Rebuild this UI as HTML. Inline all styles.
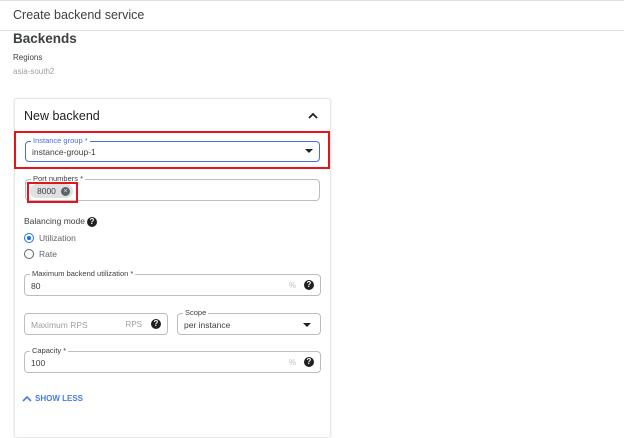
<!DOCTYPE html>
<html><head><style>
*{box-sizing:border-box;margin:0;padding:0}
body{width:624px;height:413px;background:#fff;font-family:"Liberation Sans",sans-serif;position:relative;overflow:hidden;color:#202124}
.a{position:absolute}
.f{position:absolute;border:1px solid #bdbdbd;border-radius:4px;height:22px}
.lbl{position:absolute;top:-6px;left:5px;background:#fff;padding:0 2px;font-size:7.5px;color:#3c4043;line-height:9px}
.val{position:absolute;left:6px;top:6px;font-size:8.5px;color:#3c4043}
.q{position:absolute;width:10px;height:10px;border-radius:50%;background:#202124;color:#fff;font-size:8px;font-weight:bold;text-align:center;line-height:10px}
.tri{position:absolute;width:0;height:0;border-left:4px solid transparent;border-right:4px solid transparent;border-top:4px solid #202124}
</style></head><body>
<div class="a" style="left:0;top:0;width:624px;height:1px;background:#e0e0e0"></div>
<div class="a" style="left:0;top:30px;width:624px;height:1px;background:#e0e0e0"></div>
<div class="a" style="left:13px;top:8px;font-size:12.5px;color:#3c4043">Create backend service</div>
<div class="a" style="left:13px;top:31px;font-size:13.5px;font-weight:bold;color:#3c4043">Backends</div>
<div class="a" style="left:13px;top:53px;font-size:8px;color:#3c4043">Regions</div>
<div class="a" style="left:13px;top:67px;font-size:8px;color:#9aa0a6">asia-south2</div>
<div class="a" style="left:14px;top:98px;width:317px;height:340px;border:1px solid #e8e8e8;border-radius:3px;box-shadow:0 0 2px rgba(0,0,0,.12)"></div>
<div class="a" style="left:24px;top:109px;font-size:12.5px;color:#202124">New backend</div>
<svg class="a" style="left:307px;top:112px" width="12" height="8"><path d="M2 6 L6 2 L10 6" stroke="#202124" stroke-width="1.8" fill="none"/></svg>
<div class="f" style="left:25px;top:141px;width:295px;height:21px;border:1.5px solid #4a6ee0">
 <div class="lbl" style="color:#4a6ee0">Instance group *</div>
 <div class="val" style="top:5px">instance-group-1</div>
 <div class="tri" style="right:6px;top:7px"></div>
</div>
<div class="a" style="left:14px;top:131px;width:316px;height:38px;border:2px solid #e3141b"></div>
<div class="f" style="left:25px;top:179px;width:295px;height:22px">
 <div class="lbl">Port numbers *</div>
 <div class="a" style="left:4px;top:4px;width:43px;height:14px;border-radius:7px;background:#e0e0e0;font-size:8.5px;color:#3c4043;padding:2px 0 0 7px">8000</div>
 <div class="a" style="left:35px;top:7px;width:9px;height:9px;border-radius:50%;background:#5f6368;color:#e0e0e0;font-size:7px;line-height:9px;text-align:center">×</div>
</div>
<div class="a" style="left:27px;top:182px;width:51px;height:21px;border:2px solid #e3141b"></div>
<div class="a" style="left:24px;top:216px;font-size:8.5px;color:#3c4043">Balancing mode</div>
<div class="q" style="left:87px;top:217px">?</div>
<div class="a" style="left:24px;top:233px;width:10px;height:10px;border-radius:50%;border:1.5px solid #1a73e8"><div class="a" style="left:2px;top:2px;width:3.5px;height:3.5px;border-radius:50%;background:#1a73e8"></div></div>
<div class="a" style="left:39px;top:233px;font-size:8.5px;color:#5f6368">Utilization</div>
<div class="a" style="left:24px;top:249px;width:10px;height:10px;border-radius:50%;border:1.5px solid #5f6368"></div>
<div class="a" style="left:39px;top:249px;font-size:8.5px;color:#5f6368">Rate</div>
<div class="f" style="left:24px;top:274px;width:297px">
 <div class="lbl">Maximum backend utilization *</div>
 <div class="val">80</div>
 <div class="a" style="right:24px;top:6px;font-size:8px;color:#bdbdbd">%</div>
 <div class="q" style="right:6px;top:5px">?</div>
</div>
<div class="f" style="left:24px;top:313px;width:144px">
 <div class="val" style="color:#9aa0a6">Maximum RPS</div>
 <div class="a" style="right:25px;top:6px;font-size:8px;color:#9aa0a6">RPS</div>
 <div class="q" style="right:6px;top:5px">?</div>
</div>
<div class="f" style="left:177px;top:313px;width:144px">
 <div class="lbl">Scope</div>
 <div class="val">per instance</div>
 <div class="tri" style="right:9px;top:9px"></div>
</div>
<div class="f" style="left:24px;top:351px;width:297px">
 <div class="lbl">Capacity *</div>
 <div class="val">100</div>
 <div class="a" style="right:24px;top:6px;font-size:8px;color:#bdbdbd">%</div>
 <div class="q" style="right:6px;top:5px">?</div>
</div>
<svg class="a" style="left:22px;top:395px" width="10" height="7"><path d="M1 6 L5 2 L9 6" stroke="#4a7be0" stroke-width="1.6" fill="none"/></svg>
<div class="a" style="left:35px;top:394px;font-size:8px;font-weight:bold;color:#4a7be0">SHOW LESS</div>
</body></html>
